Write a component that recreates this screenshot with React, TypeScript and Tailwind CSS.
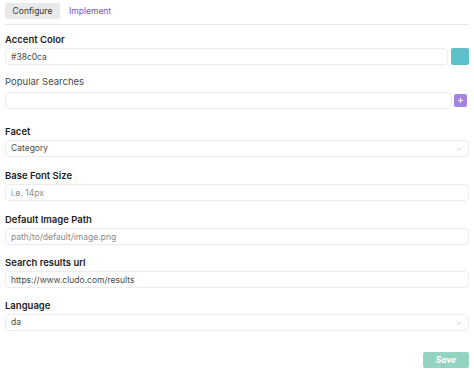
import { FC } from 'react';

const font = { fontFamily: 'Inter, "Noto Sans", sans-serif' };

const Label: FC<{ text: string; bold?: boolean }> = ({ text, bold = true }) => (
  <div
    className={`text-[9.5px] leading-[12px] ${bold ? 'font-semibold text-[#1d1d1d]' : 'font-normal text-[#4a4a4a]'}`}
  >
    {text}
  </div>
);

const TextInput: FC<{ value?: string; placeholder?: string }> = ({ value, placeholder }) => (
  <input
    readOnly
    defaultValue={value}
    placeholder={placeholder}
    className="block w-full h-[17px] border border-[#ececec] rounded-[4px] bg-white px-[5px] text-[8.5px] text-[#4a4a4a] placeholder:text-[#8a8a8a] outline-none"
  />
);

const SelectBox: FC<{ value: string }> = ({ value }) => (
  <div className="w-full h-[17px] border border-[#ececec] rounded-[4px] bg-white px-[5px] flex items-center justify-between">
    <span className="text-[8.5px] text-[#4a4a4a]">{value}</span>
    <svg width="6" height="6" viewBox="0 0 6 6" className="mr-[1px]">
      <path d="M1 2 L3 4 L5 2" fill="none" stroke="#c8c8c8" strokeWidth="0.8" />
    </svg>
  </div>
);

export default function App() {
  return (
    <div className="w-[474px] h-[372px] bg-white px-[5px]" style={font}>
      {/* Tabs */}
      <div className="flex items-center pt-[3px]">
        <div className="h-[16px] w-[55px] bg-[#e9e9e9] rounded-[2px] flex items-center justify-center text-[8.5px] text-[#333]">
          Configure
        </div>
        <div className="ml-[9px] text-[8.5px] text-[#7b4fd6]">Implement</div>
      </div>
      <div className="mt-[5px] border-b border-[#e6e6e6]" />

      {/* Accent Color */}
      <div className="mt-[9px]">
        <Label text="Accent Color" />
        <div className="mt-[2px] flex items-center gap-[3px]">
          <TextInput value="#38c0ca" />
          <div className="w-[18px] h-[17px] shrink-0 rounded-[2px] bg-[#5ec0ca]" />
        </div>
      </div>

      {/* Popular Searches */}
      <div className="mt-[11px]">
        <Label text="Popular Searches" bold={false} />
        <div className="mt-[4px] flex items-center gap-[2px] pr-[2px]">
          <TextInput />
          <div className="w-[13px] h-[13px] shrink-0 rounded-[2px] bg-[#a583e3] flex items-center justify-center">
            <svg width="7" height="7" viewBox="0 0 7 7">
              <path d="M3.5 1 V6 M1 3.5 H6" stroke="white" strokeWidth="1.2" />
            </svg>
          </div>
        </div>
      </div>

      {/* Facet */}
      <div className="mt-[17px]">
        <Label text="Facet" />
        <div className="mt-[2px]">
          <SelectBox value="Category" />
        </div>
      </div>

      {/* Base Font Size */}
      <div className="mt-[13px]">
        <Label text="Base Font Size" />
        <div className="mt-[2px]">
          <TextInput placeholder="i.e. 14px" />
        </div>
      </div>

      {/* Default Image Path */}
      <div className="mt-[13px]">
        <Label text="Default Image Path" />
        <div className="mt-[2px]">
          <TextInput placeholder="path/to/default/image.png" />
        </div>
      </div>

      {/* Search results url */}
      <div className="mt-[12px]">
        <Label text="Search results url" />
        <div className="mt-[2px]">
          <TextInput value="https://www.cludo.com/results" />
        </div>
      </div>

      {/* Language */}
      <div className="mt-[12px]">
        <Label text="Language" />
        <div className="mt-[2px]">
          <SelectBox value="da" />
        </div>
      </div>

      <div className="mt-[21px] flex justify-end">
        <button className="w-[46px] h-[16px] rounded-[2px] bg-[#93d3c1] text-white text-[8.5px] font-bold italic">
          Save
        </button>
      </div>
    </div>
  );
}
